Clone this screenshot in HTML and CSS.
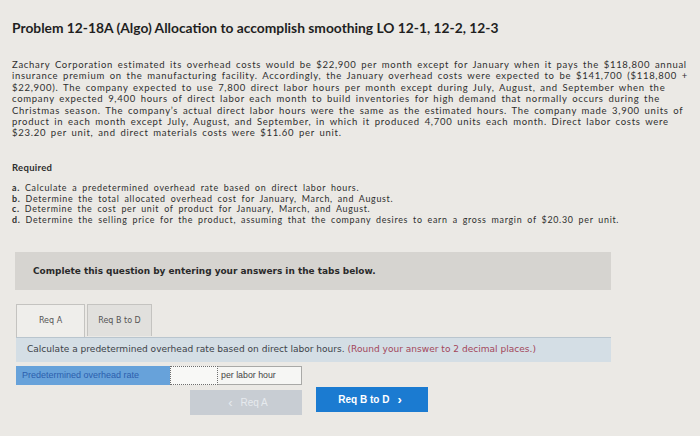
FILE: index.html
```html
<!DOCTYPE html>
<html>
<head>
<meta charset="utf-8">
<link rel="stylesheet" href="styles.css">
</head>
<body>
<div class="page">
  <h1 class="title">Problem 12-18A (Algo) Allocation to accomplish smoothing LO 12-1, 12-2, 12-3</h1>
  <p class="story">Zachary Corporation estimated its overhead costs would be $22,900 per month except for January when it pays the $118,800 annual<br>insurance premium on the manufacturing facility. Accordingly, the January overhead costs were expected to be $141,700 ($118,800 +<br>$22,900). The company expected to use 7,800 direct labor hours per month except during July, August, and September when the<br>company expected 9,400 hours of direct labor each month to build inventories for high demand that normally occurs during the<br>Christmas season. The company’s actual direct labor hours were the same as the estimated hours. The company made 3,900 units of<br>product in each month except July, August, and September, in which it produced 4,700 units each month. Direct labor costs were<br>$23.20 per unit, and direct materials costs were $11.60 per unit.</p>
  <div class="required">Required</div>
  <ul class="reqs">
    <li><b>a.</b> Calculate a predetermined overhead rate based on direct labor hours.</li>
    <li><b>b.</b> Determine the total allocated overhead cost for January, March, and August.</li>
    <li><b>c.</b> Determine the cost per unit of product for January, March, and August.</li>
    <li><b>d.</b> Determine the selling price for the product, assuming that the company desires to earn a gross margin of $20.30 per unit.</li>
  </ul>
  <div class="panel">Complete this question by entering your answers in the tabs below.</div>
  <div class="tabs">
    <div class="tab active">Req A</div>
    <div class="tab">Req B to D</div>
  </div>
  <div class="instr">Calculate a predetermined overhead rate based on direct labor hours. <span class="note">(Round your answer to 2 decimal places.)</span></div>
  <div class="row">
    <div class="label">Predetermined overhead rate</div>
    <div class="input"></div>
    <div class="unit">per labor hour</div>
  </div>
  <div class="nav">
    <div class="btn prev"><span class="chev">&lsaquo;</span> Req A</div>
    <div class="btn next">Req B to D <span class="chev">&rsaquo;</span></div>
  </div>
</div>
</body>
</html>
```

FILE: styles.css
```css
html, body {
  margin: 0;
  padding: 0;
}
body {
  background: #ebe9e5;
  width: 700px;
  height: 436px;
  overflow: hidden;
  font-family: Lato, "Open Sans", sans-serif;
  color: #2e2e2e;
}
.page {
  padding: 19px 0 0 12px;
  display: flex;
  flex-direction: column;
  align-items: flex-start;
}
.title {
  margin: 0;
  font-size: 13.8px;
  font-weight: 700;
  color: #1f1f1f;
  line-height: 18px;
}
.story {
  margin: 22px 0 0 0;
  font-size: 9.5px;
  line-height: 11.4px;
  letter-spacing: 0.72px;
  word-spacing: 1.6px;
  color: #2f2f2f;
  white-space: nowrap;
}
.required {
  margin-top: 23px;
  font-size: 9.5px;
  font-weight: 700;
  line-height: 12px;
  letter-spacing: 0.3px;
}
.reqs {
  list-style: none;
  margin: 9px 0 0 0;
  padding: 0;
  font-size: 8.9px;
  line-height: 10.7px;
  letter-spacing: 0.7px;
  word-spacing: 2px;
}
.reqs li {
  white-space: nowrap;
}
.panel {
  margin: 26px 0 0 3px;
  width: 596px;
  height: 38px;
  box-sizing: border-box;
  background: #d6d4d0;
  padding: 14px 0 0 18px;
  font-family: "DejaVu Sans", Verdana, sans-serif;
  font-size: 8.95px;
  font-weight: 700;
  color: #2a2a2a;
}
.tabs {
  display: flex;
  margin: 14px 0 0 4px;
  align-items: flex-end;
  gap: 2px;
}
.tab {
  font-family: "DejaVu Sans", Verdana, sans-serif;
  font-size: 8px;
  color: #555;
  height: 32px;
  display: flex;
  align-items: center;
  justify-content: center;
  box-sizing: border-box;
  border: 1px solid #c4c3c0;
  border-bottom: none;
  background: #e1e0dd;
  width: 65px;
  margin-bottom: 1px;
}
.tab.active {
  width: 69px;
  height: 33px;
  margin-bottom: 0;
  background: #efeeeb;
}
.instr {
  margin-left: 4px;
  width: 595px;
  height: 25px;
  box-sizing: border-box;
  background: #d4dee5;
  border-top: 1px solid #b9c5ce;
  padding: 6px 0 0 11px;
  font-family: "DejaVu Sans", Verdana, sans-serif;
  font-size: 9.05px;
  color: #3c4248;
}
.note {
  color: #a3475b;
}
.row {
  display: flex;
  margin: 4px 0 0 4px;
  height: 19px;
}
.label {
  width: 154px;
  background: #67a2da;
  color: #2c5fae;
  font-family: "Liberation Sans", Arial, sans-serif;
  font-size: 9px;
  display: flex;
  align-items: center;
  padding-left: 6px;
  box-sizing: border-box;
}
.input {
  width: 48px;
  background: #f8f8f6;
  border: 1px dotted #6e6e6e;
  box-sizing: border-box;
}
.unit {
  width: 84px;
  background: #f6f6f4;
  border: 1px solid #a9a9a7;
  border-left: none;
  box-sizing: border-box;
  font-family: "Liberation Sans", Arial, sans-serif;
  font-size: 8.8px;
  color: #444;
  display: flex;
  align-items: center;
  padding-left: 3px;
}
.nav {
  display: flex;
  gap: 14px;
  margin: 2px 0 0 178px;
  align-items: flex-start;
}
.btn {
  width: 112px;
  height: 25px;
  display: flex;
  align-items: center;
  justify-content: center;
  font-family: "Liberation Sans", Arial, sans-serif;
  font-size: 10px;
  font-weight: 700;
  gap: 4px;
}
.btn.prev {
  background: #c8cdd3;
  color: #e6eaee;
  margin-top: 3px;
  font-weight: 400;
}
.btn.next {
  background: #1b7bd1;
  color: #ffffff;
}
.chev {
  font-size: 13px;
  line-height: 1;
  margin: 0 4px;
}
```
